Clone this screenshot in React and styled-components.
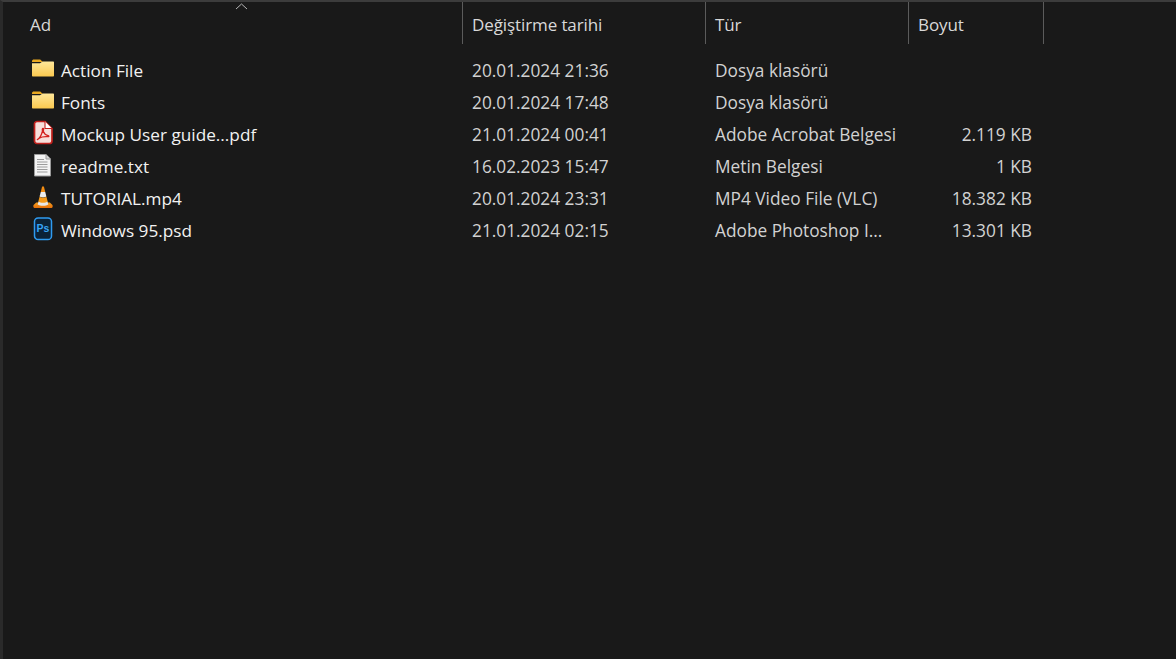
import React from "react";
import styled, { createGlobalStyle } from "styled-components";

const Global = createGlobalStyle`
  html, body { margin: 0; padding: 0; background: #191919; }
  body { font-family: "Open Sans", "Noto Sans", sans-serif; overflow: hidden; }
`;

const Page = styled.div`
  width: 1176px;
  height: 659px;
  display: flex;
  flex-direction: column;
  background: #191919;
  border-top: 2px solid #3c3c3c;
  border-left: 3px solid #2a2a2a;
  box-sizing: border-box;
  overflow: hidden;
`;

const COLS = "460px 243px 203px 135px";

const Header = styled.div`
  position: relative;
  display: grid;
  grid-template-columns: ${COLS};
  height: 42px;
  flex: none;
  margin-bottom: 10px;
`;

const HeadCell = styled.div`
  display: flex;
  align-items: center;
  height: 42px;
  padding-top: 2px;
  box-sizing: border-box;
  padding-left: ${(p) => p.$pad}px;
  border-right: 1px solid #5b5b5b;
  color: #d8d8d8;
  font-size: 17px;
  letter-spacing: -0.1px;
`;

const Caret = styled.svg`
  position: absolute;
  left: 232px;
  top: 1px;
  width: 13px;
  height: 7px;
`;

const Rows = styled.div`
  display: flex;
  flex-direction: column;
`;

const Row = styled.div`
  display: grid;
  grid-template-columns: ${COLS};
  height: 32px;
  align-items: center;
  font-size: 17.3px;
  color: #d2d2d2;
  white-space: nowrap;
`;

const NameCell = styled.div`
  display: flex;
  align-items: center;
  padding-left: 27px;
  color: #f2f2f2;
  font-size: 17.2px;
`;

const IconBox = styled.span`
  width: 24px;
  height: 24px;
  margin-right: 7px;
  display: flex;
  align-items: center;
  justify-content: center;
  flex: none;
`;

const DateCell = styled.div`
  padding-left: 9px;
`;

const TypeCell = styled.div`
  padding-left: 9px;
`;

const SizeCell = styled.div`
  text-align: right;
  padding-right: 12px;
`;

const FolderIcon = () => (
  <svg width="24" height="24" viewBox="0 0 24 24">
    <defs>
      <linearGradient id="fold" x1="0" y1="0" x2="0" y2="1">
        <stop offset="0" stopColor="#fee79a" />
        <stop offset="1" stopColor="#fbc94f" />
      </linearGradient>
    </defs>
    <g transform="translate(1 -2)">
      <path d="M1 5.500C1 4 1.800 3.500 3 3.500h5.500c1 0 1.600.6 2.300 1.600L11.500 6H1z" fill="#e9a820" />
      <path d="M1 7.200h8l2.500-1.700H22c.6 0 1 .4 1 1V19.500c0 .6-.4 1-1 1H2c-.6 0-1-.4-1-1z" fill="url(#fold)" />
    </g>
  </svg>
);

const PdfIcon = () => (
  <svg width="24" height="24" viewBox="0 0 24 24" style={{ overflow: "visible" }}>
    <g transform="translate(0 -1.500)">
      <path d="M6.500 1h8.500l7 7v12.500a2.500 2.500 0 0 1-2.500 2.500H7a2.500 2.500 0 0 1-2.500-2.500V3.500A2.500 2.500 0 0 1 7 1z" fill="#f7dfdb" stroke="#c0201c" strokeWidth="1.700" />
      <path d="M15 1V8h7" fill="#fff" stroke="#c0201c" strokeWidth="1.100" />
      <path d="M7.500 19c2-1 4-4.500 5-8.500-.4-1.600-.2-2.700.5-2.700s.8 1.300.2 3c1 2.300 2.300 3.800 4.500 4.200 1.500.2 1.500 1.300.2 1.200-2.500-.2-6.500.2-8.800 1.500-1 .8-2 1.600-1.600 1.300z" fill="none" stroke="#d3211e" strokeWidth="1.300" />
    </g>
  </svg>
);

const TextIcon = () => (
  <svg width="24" height="24" viewBox="0 0 24 24">
    <g transform="translate(0 -1)">
      <path d="M4.500 1.500H16l4.500 4.500v17h-16z" fill="#f3f3f3" stroke="#9a9a9a" />
      <path d="M16 1.500V6h4.500" fill="#d8d8d8" stroke="#9a9a9a" />
      <path d="M7 6.500h7M7 9h10.500M7 11.500h10.500M7 14h10.500M7 16.500h10.500M7 19h10.500" stroke="#9b9b9b" strokeWidth="1" />
    </g>
  </svg>
);

const VlcIcon = () => (
  <svg width="24" height="24" viewBox="0 0 24 24">
    <defs>
      <linearGradient id="cone" x1="0" y1="0" x2="0" y2="1">
        <stop offset="0" stopColor="#f6a11f" />
        <stop offset="1" stopColor="#e66e0a" />
      </linearGradient>
    </defs>
    <g transform="translate(2.200 -0.500) scale(0.9 1)">
      <path d="M1.500 19.500 4.500 17h15l3 2.500c.6 1 0 3-1 3h-19c-1 0-1.600-2-1-3z" fill="url(#cone)" />
      <path d="M9.500 6.500 11 1h2l1.500 5.500z" fill="#f28c13" />
      <path d="M9.500 6.500h5l1.300 4.500c-2 1.300-5.600 1.300-7.600 0z" fill="#ededed" />
      <path d="M8.200 11.300c2 1.300 5.600 1.300 7.600 0l1.400 4.700c-2 2.500-8.400 2.500-10.400 0z" fill="#f59a1a" />
      <path d="M7 16c2.200 1.800 7.800 1.800 10 0l.9 3c-2.700 1.800-9.100 1.800-11.800 0z" fill="#e8e8e8" />
    </g>
  </svg>
);

const PsIcon = () => (
  <svg width="24" height="24" viewBox="0 0 24 24" style={{ overflow: "visible" }}>
    <rect x="4.500" y="0" width="17" height="21.500" rx="3.600" fill="#0b2238" stroke="#2f9bf0" strokeWidth="1.500" />
    <text x="13" y="14" textAnchor="middle" fontFamily="'Liberation Sans', sans-serif" fontSize="10.500" fontWeight="700" fill="#36a4f7">Ps</text>
  </svg>
);

const files = [
  { name: "Action File", date: "20.01.2024 21:36", type: "Dosya klasörü", size: "", Icon: FolderIcon },
  { name: "Fonts", date: "20.01.2024 17:48", type: "Dosya klasörü", size: "", Icon: FolderIcon },
  { name: "Mockup User guide...pdf", date: "21.01.2024 00:41", type: "Adobe Acrobat Belgesi", size: "2.119 KB", Icon: PdfIcon },
  { name: "readme.txt", date: "16.02.2023 15:47", type: "Metin Belgesi", size: "1 KB", Icon: TextIcon },
  { name: "TUTORIAL.mp4", date: "20.01.2024 23:31", type: "MP4 Video File (VLC)", size: "18.382 KB", Icon: VlcIcon },
  { name: "Windows 95.psd", date: "21.01.2024 02:15", type: "Adobe Photoshop I...", size: "13.301 KB", Icon: PsIcon },
];

export default function App() {
  return (
    <Page>
      <Global />
      <Header>
        <HeadCell $pad={27}>Ad</HeadCell>
        <HeadCell $pad={9}>Değiştirme tarihi</HeadCell>
        <HeadCell $pad={9}>Tür</HeadCell>
        <HeadCell $pad={9}>Boyut</HeadCell>
        <Caret viewBox="0 0 13 7" fill="none" stroke="#b5b5b5" strokeWidth="1">
          <path d="M1 6l5.500-5L12 6" />
        </Caret>
      </Header>
      <Rows>
        {files.map(({ name, date, type, size, Icon }) => (
          <Row key={name}>
            <NameCell>
              <IconBox>
                <Icon />
              </IconBox>
              {name}
            </NameCell>
            <DateCell>{date}</DateCell>
            <TypeCell>{type}</TypeCell>
            <SizeCell>{size}</SizeCell>
          </Row>
        ))}
      </Rows>
    </Page>
  );
}
